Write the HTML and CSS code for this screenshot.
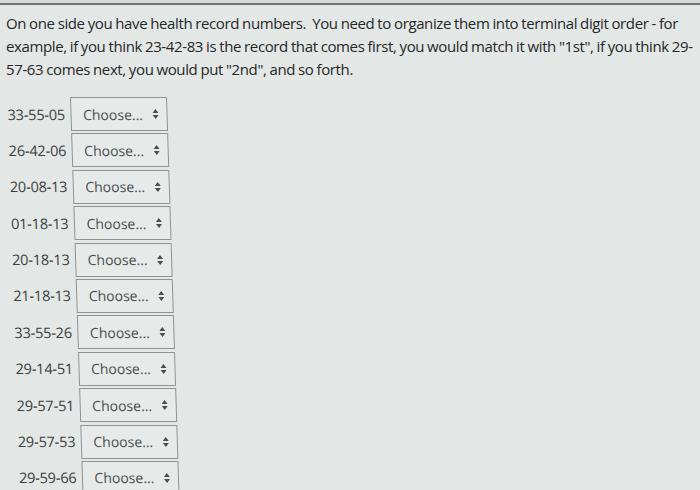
FILE: index.html
```html
<!DOCTYPE html>
<html lang="en">
<head>
<meta charset="utf-8">
<title>Terminal digit order</title>
<link rel="stylesheet" href="styles.css">
</head>
<body>
<div class="topbar"></div>
<p class="prompt">On one side you have health record numbers.&nbsp; You need to organize them into terminal digit order - for example, if you think 23-42-83 is the record that comes first, you would match it with "1st", if you think 29-<wbr>57-63 comes next, you would put "2nd", and so forth.</p>

<div class="matches">
  <span class="rec">33-55-05</span>
  <div class="pick"><span>Choose...</span><svg class="arr" viewBox="0 0 6 10"><path d="M3 0L6 4H0z M3 10L6 6H0z"/></svg></div>
  <span class="rec">26-42-06</span>
  <div class="pick"><span>Choose...</span><svg class="arr" viewBox="0 0 6 10"><path d="M3 0L6 4H0z M3 10L6 6H0z"/></svg></div>
  <span class="rec">20-08-13</span>
  <div class="pick"><span>Choose...</span><svg class="arr" viewBox="0 0 6 10"><path d="M3 0L6 4H0z M3 10L6 6H0z"/></svg></div>
  <span class="rec">01-18-13</span>
  <div class="pick"><span>Choose...</span><svg class="arr" viewBox="0 0 6 10"><path d="M3 0L6 4H0z M3 10L6 6H0z"/></svg></div>
  <span class="rec">20-18-13</span>
  <div class="pick"><span>Choose...</span><svg class="arr" viewBox="0 0 6 10"><path d="M3 0L6 4H0z M3 10L6 6H0z"/></svg></div>
  <span class="rec">21-18-13</span>
  <div class="pick"><span>Choose...</span><svg class="arr" viewBox="0 0 6 10"><path d="M3 0L6 4H0z M3 10L6 6H0z"/></svg></div>
  <span class="rec">33-55-26</span>
  <div class="pick"><span>Choose...</span><svg class="arr" viewBox="0 0 6 10"><path d="M3 0L6 4H0z M3 10L6 6H0z"/></svg></div>
  <span class="rec">29-14-51</span>
  <div class="pick"><span>Choose...</span><svg class="arr" viewBox="0 0 6 10"><path d="M3 0L6 4H0z M3 10L6 6H0z"/></svg></div>
  <span class="rec">29-57-51</span>
  <div class="pick"><span>Choose...</span><svg class="arr" viewBox="0 0 6 10"><path d="M3 0L6 4H0z M3 10L6 6H0z"/></svg></div>
  <span class="rec">29-57-53</span>
  <div class="pick"><span>Choose...</span><svg class="arr" viewBox="0 0 6 10"><path d="M3 0L6 4H0z M3 10L6 6H0z"/></svg></div>
  <span class="rec">29-59-66</span>
  <div class="pick"><span>Choose...</span><svg class="arr" viewBox="0 0 6 10"><path d="M3 0L6 4H0z M3 10L6 6H0z"/></svg></div>
</div>
</body>
</html>
```

FILE: styles.css
```css
html, body {
  margin: 0;
  padding: 0;
}

body {
  background: #e3e7e5;
  font-family: "Open Sans", "Liberation Sans", sans-serif;
  color: #262828;
  height: 490px;
  overflow: hidden;
}

.topbar {
  height: 3px;
  background: #d6dad8;
  border-bottom: 2px solid #6f7472;
}

.prompt {
  margin: 0;
  padding: 7px 3px 0 6px;
  font-size: 15px;
  line-height: 23px;
  letter-spacing: -0.38px;
  word-spacing: -0.5px;
}

.matches {
  display: grid;
  grid-template-columns: max-content max-content;
  column-gap: 6px;
  row-gap: 2.4px;
  align-items: center;
  margin-top: 16px;
  padding-left: 7px;
  transform: skewX(1.8deg);
  transform-origin: 0 0;
}

.rec {
  font-size: 14.5px;
  color: #3a3d3d;
  letter-spacing: -0.2px;
}

.pick {
  box-sizing: border-box;
  height: 34px;
  width: 97px;
  border: 1px solid #8e9492;
  background: #e6eae8;
  display: flex;
  align-items: center;
  padding-left: 11px;
  gap: 10px;
  font-size: 14px;
  color: #4a4e4e;
}

.arr {
  width: 6px;
  height: 10px;
  fill: #4a4e4e;
}
```
